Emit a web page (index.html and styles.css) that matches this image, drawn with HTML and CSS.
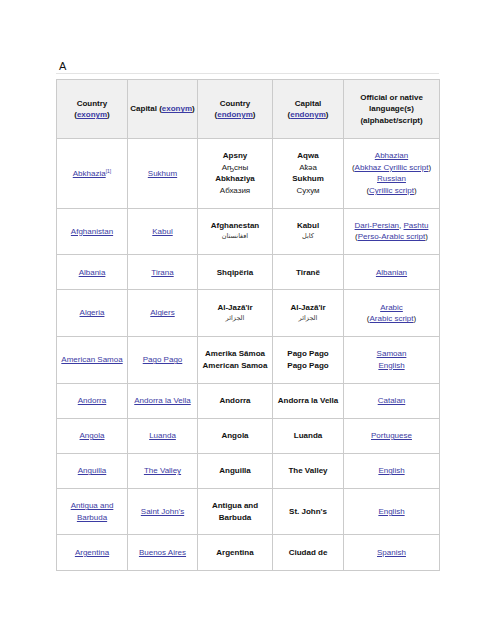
FILE: index.html
```html
<!DOCTYPE html>
<html lang="en">
<head>
<meta charset="utf-8">
<title>List of national capitals — A</title>
<link rel="stylesheet" href="styles.css">
</head>
<body>
<div class="page">
  <h2 class="section-head">A</h2>
  <table class="capitals">
    <colgroup>
      <col class="c1"><col class="c2"><col class="c3"><col class="c4"><col class="c5">
    </colgroup>
    <thead>
      <tr>
        <th>Country<br>(<a href="#">exonym</a>)</th>
        <th class="nowrap">Capital (<a href="#">exonym</a>)</th>
        <th>Country<br>(<a href="#">endonym</a>)</th>
        <th>Capital<br>(<a href="#">endonym</a>)</th>
        <th>Official or native<br>language(s)<br>(alphabet/script)</th>
      </tr>
    </thead>
    <tbody>
      <tr>
        <td><a href="#">Abkhazia</a><sup class="ref">[1]</sup></td>
        <td><a href="#">Sukhum</a></td>
        <td><b>Apsny</b><br>Аҧсны<br><b>Abkhaziya</b><br>Абхазия</td>
        <td><b>Aqwa</b><br>Аҟәа<br><b>Sukhum</b><br>Сухум</td>
        <td><a href="#">Abhazian</a><br>(<a href="#">Abkhaz Cyrillic script</a>)<br><a href="#">Russian</a><br>(<a href="#">Cyrillic script</a>)</td>
      </tr>
      <tr>
        <td><a href="#">Afghanistan</a></td>
        <td><a href="#">Kabul</a></td>
        <td><b>Afghanestan</b><div class="ar" dir="rtl">افغانستان</div></td>
        <td><b>Kabul</b><div class="ar" dir="rtl">کابل</div></td>
        <td><a href="#">Dari-Persian</a>, <a href="#">Pashtu</a><br>(<a href="#">Perso-Arabic script</a>)</td>
      </tr>
      <tr>
        <td><a href="#">Albania</a></td>
        <td><a href="#">Tirana</a></td>
        <td><b>Shqipëria</b></td>
        <td><b>Tiranë</b></td>
        <td><a href="#">Albanian</a></td>
      </tr>
      <tr>
        <td><a href="#">Algeria</a></td>
        <td><a href="#">Algiers</a></td>
        <td><b>Al-Jazā'ir</b><div class="ar" dir="rtl">الجزائر</div></td>
        <td><b>Al-Jazā'ir</b><div class="ar" dir="rtl">الجزائر</div></td>
        <td><a href="#">Arabic</a><br>(<a href="#">Arabic script</a>)</td>
      </tr>
      <tr>
        <td><a href="#">American Samoa</a></td>
        <td><a href="#">Pago Pago</a></td>
        <td><b>Amerika Sāmoa</b><br><b>American Samoa</b></td>
        <td><b>Pago Pago</b><br><b>Pago Pago</b></td>
        <td><a href="#">Samoan</a><br><a href="#">English</a></td>
      </tr>
      <tr>
        <td><a href="#">Andorra</a></td>
        <td><a href="#">Andorra la Vella</a></td>
        <td><b>Andorra</b></td>
        <td><b>Andorra la Vella</b></td>
        <td><a href="#">Catalan</a></td>
      </tr>
      <tr>
        <td><a href="#">Angola</a></td>
        <td><a href="#">Luanda</a></td>
        <td><b>Angola</b></td>
        <td><b>Luanda</b></td>
        <td><a href="#">Portuguese</a></td>
      </tr>
      <tr>
        <td><a href="#">Anguilla</a></td>
        <td><a href="#">The Valley</a></td>
        <td><b>Anguilla</b></td>
        <td><b>The Valley</b></td>
        <td><a href="#">English</a></td>
      </tr>
      <tr>
        <td><a href="#">Antigua and Barbuda</a></td>
        <td><a href="#">Saint John's</a></td>
        <td><b>Antigua and<br>Barbuda</b></td>
        <td><b>St. John's</b></td>
        <td><a href="#">English</a></td>
      </tr>
      <tr>
        <td><a href="#">Argentina</a></td>
        <td><a href="#">Buenos Aires</a></td>
        <td><b>Argentina</b></td>
        <td><b>Ciudad de</b></td>
        <td><a href="#">Spanish</a></td>
      </tr>
    </tbody>
  </table>
</div>
</body>
</html>
```

FILE: styles.css
```css
html, body {
  margin: 0;
  padding: 0;
  background: #ffffff;
}

body {
  font-family: "Liberation Sans", Arial, sans-serif;
  color: #202020;
}

.page {
  width: 383px;
  margin-left: 56px;
  padding-top: 60px;
}

.section-head {
  margin: 0;
  padding: 0 0 1px 3px;
  font-size: 11px;
  line-height: 12px;
  font-weight: normal;
  color: #111111;
  border-bottom: 1px solid #e4e4e4;
}

.capitals {
  margin-top: 5px;
  width: 384px;
  border-collapse: collapse;
  table-layout: fixed;
  font-size: 8px;
  line-height: 11.5px;
}

.c1 { width: 71px; }
.c2 { width: 70px; }
.c3 { width: 75px; }
.c4 { width: 71px; }
.c5 { width: 96px; }

.capitals th,
.capitals td {
  border: 1px solid #cbcbcb;
  padding: 11.3px 3px;
  text-align: center;
  vertical-align: middle;
}

.capitals th {
  background: #f0f0f0;
  font-weight: bold;
  color: #111111;
  padding: 11.8px 1px;
}

.capitals th.nowrap {
  white-space: nowrap;
  padding: 11.8px 0;
}

.capitals td b {
  font-weight: bold;
  color: #111111;
}

.capitals a {
  color: #3b3ba3;
  text-decoration: underline;
  text-decoration-thickness: 0.5px;
  text-underline-offset: 1px;
}

.capitals th a {
  font-weight: bold;
}

.ref {
  font-size: 5px;
  line-height: 0;
  vertical-align: 3px;
  color: #3b3ba3;
}

.ar {
  height: 11.5px;
  line-height: 11.5px;
  text-align: center;
  font-family: "DejaVu Sans", "Noto Sans", sans-serif;
  font-size: 6.5px;
  color: #333333;
}
```
